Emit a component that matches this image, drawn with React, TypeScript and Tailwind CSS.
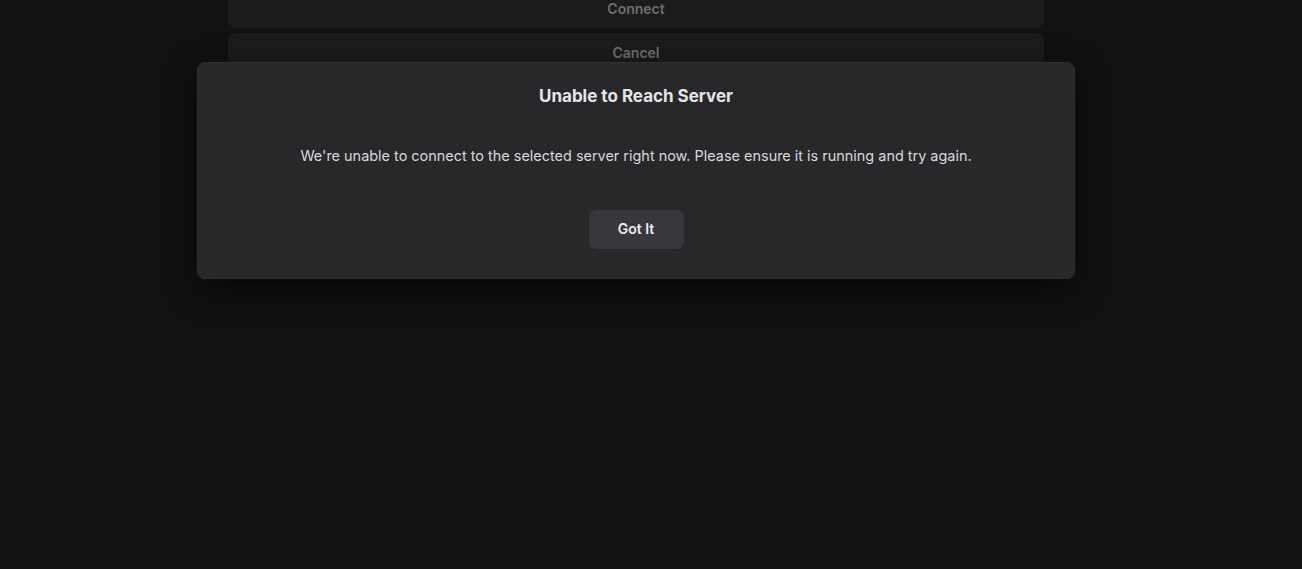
export default function App() {
  return (
    <div
      className="relative h-[569px] w-[1302px] overflow-hidden bg-[#111111]"
      style={{ fontFamily: "Inter, 'Noto Sans', sans-serif" }}
    >
      <div className="-mt-[12px] ml-[228px] flex w-[816px] flex-col gap-[5px]">
        <button className="h-[40px] rounded-[8px] bg-[#1b1b1c] text-[14px] font-semibold text-[#6e6e70]">
          Connect
        </button>
        <button className="h-[40px] rounded-[8px] bg-[#1b1b1c] pb-[2px] text-[14px] font-semibold text-[#6e6e70]">
          Cancel
        </button>
      </div>
      <div className="absolute left-[197px] top-[62px] flex w-[878px] flex-col items-center rounded-[8px] border border-[#303033] bg-[#28282b] px-6 pb-[29px] pt-[19px] shadow-[0_10px_30px_rgba(0,0,0,0.6)]">
        <h2 className="text-[17px] font-bold leading-[28px] text-[#e6e6e8]">
          Unable to Reach Server
        </h2>
        <p className="mt-[36px] text-[14.45px] leading-[20px] text-[#d8d8da]">
          We're unable to connect to the selected server right now. Please ensure it is running and try again.
        </p>
        <button className="mt-[44px] h-[39px] w-[95px] rounded-[8px] bg-[#38383c] pb-[2px] text-[14px] font-semibold text-[#ececee]">
          Got It
        </button>
      </div>
    </div>
  );
}
